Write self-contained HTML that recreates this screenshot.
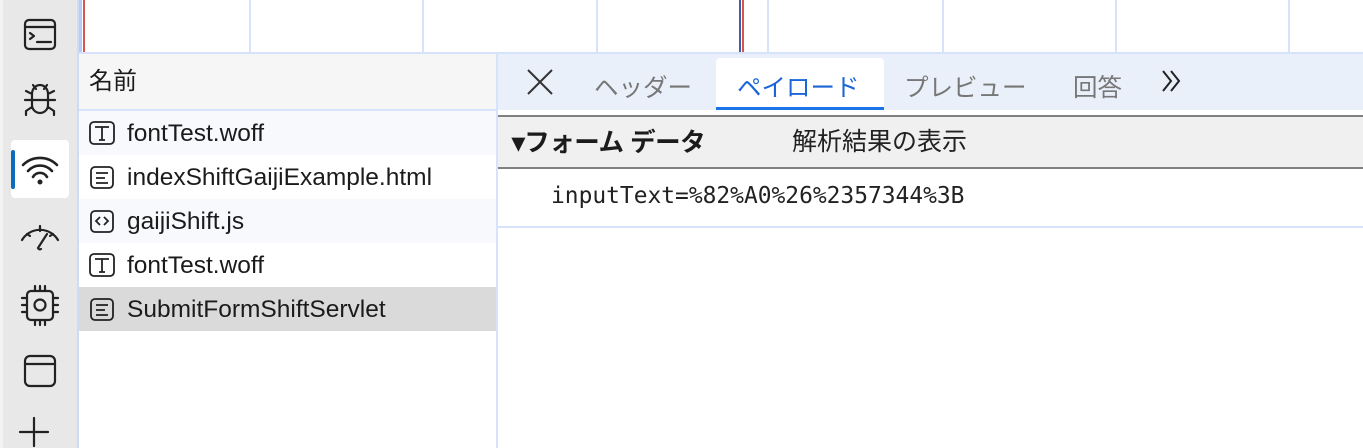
<!DOCTYPE html>
<html><head><meta charset="utf-8"><style>
*{margin:0;padding:0;box-sizing:border-box}
body{width:1363px;height:448px;overflow:hidden;background:#fff;font-family:"Segoe UI","Liberation Sans","Noto Sans CJK JP",sans-serif;color:#1b1b1b;position:relative}
.abs{position:absolute}
.side{left:0;top:0;width:77px;height:448px;background:#e8e8e8;border-left:3px solid #f3f3f3}
.sb{left:77px;top:0;width:2px;height:448px;background:#cddcf7}
.vl{position:absolute;top:0;width:2px;height:52px;background:#d6e3fa}
.row{position:absolute;left:79px;width:417px;height:44px;font-size:24.5px;line-height:46px;padding-left:48px}
.tab{position:absolute;top:54px;height:56px;line-height:70px;font-size:24.5px;color:#777;font-family:"Liberation Sans","Noto Sans CJK JP",sans-serif}
</style></head><body>
<div class="abs side"></div>
<div class="abs sb"></div>
<div class="abs" style="left:79px;top:0;width:3px;height:52px;background:#b8cdf5"></div>
<div class="abs" style="left:83px;top:0;width:2px;height:52px;background:#d9534f"></div>
<div class="vl" style="left:249px"></div><div class="vl" style="left:422px"></div><div class="vl" style="left:596px"></div>
<div class="abs" style="left:739px;top:0;width:2px;height:52px;background:#3b5fb0"></div>
<div class="abs" style="left:742px;top:0;width:2px;height:52px;background:#d9534f"></div>
<div class="vl" style="left:767px"></div><div class="vl" style="left:942px"></div><div class="vl" style="left:1115px"></div><div class="vl" style="left:1288px"></div>
<div class="abs" style="left:79px;top:52px;width:1284px;height:2px;background:#d6e3fa"></div>
<div class="abs" style="left:11px;top:140px;width:58px;height:58px;background:#fff;border-radius:4px"></div>
<div class="abs" style="left:11px;top:150px;width:4px;height:39px;background:#0f6cbd;border-radius:2px"></div>
<svg class="abs" style="left:0;top:0" width="77" height="448" fill="none" stroke="#222" stroke-width="2.2" stroke-linecap="round" stroke-linejoin="round">
<rect x="25" y="20" width="30" height="29" rx="4"/><path d="M25 27h30M30 33l4 3-4 3M37 42h14"/>
<path d="M32 94a8 9 0 0 1 16 0v11a8 8 0 0 1-16 0z M32 100h16 M36 89l-3-4 M44 89l3-4 M32 100h-7 M48 100h7 M32 94l-6-3 M48 94l6-3 M32 107l-6 4v4 M48 107l6 4v4"/>
<path d="M23 165a24 24 0 0 1 34 0 M28 171a16 16 0 0 1 24 0 M33 177a8 8 0 0 1 14 0" stroke-width="2.6"/><circle cx="40" cy="182" r="2.5" fill="#222" stroke="none"/>
<path d="M22 240a21 21 0 0 1 36 0 M40 226v5 M27 234l3 2 M53 234l-3 2 M38 248l9-14 M38 248a2 2 0 0 0 3 1"/>
<rect x="27" y="291" width="26" height="29" rx="4"/><circle cx="40" cy="305" r="5.5"/><path d="M22 298h5M22 305h5M22 312h5M53 298h5M53 305h5M53 312h5M35 286v5M40 286v5M45 286v5M35 320v5M40 320v5M45 320v5"/>
<rect x="25" y="356" width="30" height="30" rx="5"/><path d="M25 364h30"/>
<path d="M34 418v28M20 432h28"/>
</svg>
<div class="abs" style="left:79px;top:54px;width:417px;height:55px;background:#f6f6f6;font-family:'Liberation Sans','Noto Sans CJK JP',sans-serif;font-size:24px;line-height:56px;padding-left:10px">名前</div>
<div class="abs" style="left:79px;top:109px;width:417px;height:2px;background:#d6e3fa"></div>
<div class="abs" style="left:496px;top:54px;width:2px;height:394px;background:#d6e3fa"></div>
<div class="row" style="top:111px;background:#f7f9fd">fontTest.woff</div>
<div class="row" style="top:155px">indexShiftGaijiExample.html</div>
<div class="row" style="top:199px;background:#f7f9fd">gaijiShift.js</div>
<div class="row" style="top:243px">fontTest.woff</div>
<div class="row" style="top:287px;background:#dadada">SubmitFormShiftServlet</div>
<svg class="abs" style="left:79px;top:111px" width="40" height="220" fill="none" stroke="#222" stroke-width="1.8">
<rect x="11" y="11" width="24" height="22" rx="4"/><path d="M16 16h14M23 16v13M20 29h6"/>
<rect x="12" y="56" width="22" height="21" rx="4"/><path d="M17 62h12M17 67h9M17 72h12"/>
<rect x="12" y="100" width="22" height="21" rx="4"/><path d="M21 106l-4 4 4 4M25 106l4 4-4 4"/>
<rect x="11" y="143" width="24" height="22" rx="4"/><path d="M16 148h14M23 148v13M20 161h6"/>
<rect x="12" y="188" width="22" height="21" rx="4"/><path d="M17 194h12M17 199h9M17 204h12"/>
</svg>
<div class="abs" style="left:498px;top:54px;width:865px;height:56px;background:#eaf0f9"></div>
<div class="abs" style="left:716px;top:58px;width:168px;height:52px;background:#fff;border-radius:4px 4px 0 0"></div>
<div class="abs" style="left:716px;top:107px;width:168px;height:3px;background:#1a73e8"></div>
<svg class="abs" style="left:526px;top:68px" width="28" height="28" stroke="#333" stroke-width="2"><path d="M2 2l24 24M26 2L2 26"/></svg>
<div class="tab" style="left:594px">ヘッダー</div>
<div class="tab" style="left:737px;color:#1a66d8">ペイロード</div>
<div class="tab" style="left:904px">プレビュー</div>
<div class="tab" style="left:1073px">回答</div>
<svg class="abs" style="left:1160px;top:68px" width="26" height="26" fill="none" stroke="#222" stroke-width="2"><path d="M3 3l8 10-8 10M11 3l8 10-8 10"/></svg>
<div class="abs" style="left:498px;top:110px;width:865px;height:5px;background:#fff"></div>
<div class="abs" style="left:498px;top:115px;width:865px;height:54px;background:#f0f0f0;border-top:2px solid #808080;border-bottom:2px solid #808080"></div>
<div class="abs" style="left:512px;top:126px;font-size:25.5px;font-weight:bold;font-family:'Liberation Sans','Noto Sans CJK JP',sans-serif;line-height:34px;letter-spacing:-0.5px">▾フォーム データ</div>
<div class="abs" style="left:792px;top:126px;font-size:25px;font-family:'Liberation Sans','Noto Sans CJK JP',sans-serif;line-height:32px;color:#222">解析結果の表示</div>
<div class="abs" style="left:551px;top:181px;font-size:22.9px;font-family:'DejaVu Sans Mono','Liberation Mono',monospace;line-height:30px;color:#222">inputText=%82%A0%26%2357344%3B</div>
<div class="abs" style="left:498px;top:226px;width:865px;height:2px;background:#d6e3fa"></div>
</body></html>
